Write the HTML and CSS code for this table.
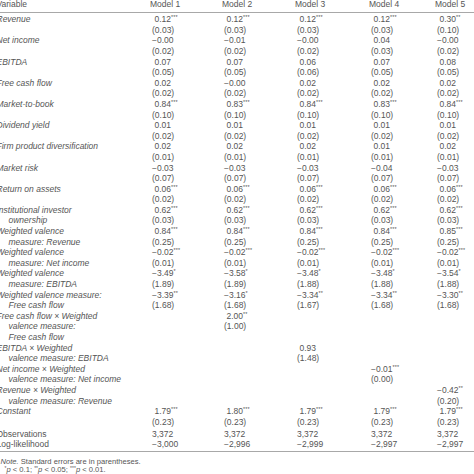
FILE: index.html
```html
<!DOCTYPE html>
<html>
<head>
<meta charset="utf-8">
<link rel="stylesheet" href="styles.css">
</head>
<body>
<div class="page">
  <div class="tbl">
    <div class="h lab up">Variable</div>
    <div class="h">Model 1</div>
    <div class="h">Model 2</div>
    <div class="h">Model 3</div>
    <div class="h">Model 4</div>
    <div class="h">Model 5</div>

    <div class="lab first"><div>Revenue</div></div>
    <div class="v first"><div class="p">0.12<sup>***</sup></div><div>(0.03)</div></div>
    <div class="v first"><div class="p">0.12<sup>***</sup></div><div>(0.03)</div></div>
    <div class="v first"><div class="p">0.12<sup>***</sup></div><div>(0.03)</div></div>
    <div class="v first"><div class="p">0.12<sup>***</sup></div><div>(0.03)</div></div>
    <div class="v first"><div class="p">0.30<sup>**</sup></div><div>(0.10)</div></div>

    <div class="lab"><div>Net income</div></div>
    <div class="v"><div>−0.00</div><div>(0.02)</div></div>
    <div class="v"><div>−0.01</div><div>(0.02)</div></div>
    <div class="v"><div>−0.00</div><div>(0.02)</div></div>
    <div class="v"><div class="p">0.04</div><div>(0.03)</div></div>
    <div class="v"><div>−0.00</div><div>(0.02)</div></div>

    <div class="lab"><div>EBITDA</div></div>
    <div class="v"><div class="p">0.07</div><div>(0.05)</div></div>
    <div class="v"><div class="p">0.07</div><div>(0.05)</div></div>
    <div class="v"><div class="p">0.06</div><div>(0.06)</div></div>
    <div class="v"><div class="p">0.07</div><div>(0.05)</div></div>
    <div class="v"><div class="p">0.08</div><div>(0.05)</div></div>

    <div class="lab"><div>Free cash flow</div></div>
    <div class="v"><div class="p">0.02</div><div>(0.02)</div></div>
    <div class="v"><div>−0.00</div><div>(0.02)</div></div>
    <div class="v"><div class="p">0.02</div><div>(0.02)</div></div>
    <div class="v"><div class="p">0.02</div><div>(0.02)</div></div>
    <div class="v"><div class="p">0.02</div><div>(0.02)</div></div>

    <div class="lab"><div>Market-to-book</div></div>
    <div class="v"><div class="p">0.84<sup>***</sup></div><div>(0.10)</div></div>
    <div class="v"><div class="p">0.83<sup>***</sup></div><div>(0.10)</div></div>
    <div class="v"><div class="p">0.84<sup>***</sup></div><div>(0.10)</div></div>
    <div class="v"><div class="p">0.83<sup>***</sup></div><div>(0.10)</div></div>
    <div class="v"><div class="p">0.84<sup>***</sup></div><div>(0.10)</div></div>

    <div class="lab"><div>Dividend yield</div></div>
    <div class="v"><div class="p">0.01</div><div>(0.02)</div></div>
    <div class="v"><div class="p">0.01</div><div>(0.02)</div></div>
    <div class="v"><div class="p">0.01</div><div>(0.02)</div></div>
    <div class="v"><div class="p">0.01</div><div>(0.02)</div></div>
    <div class="v"><div class="p">0.01</div><div>(0.02)</div></div>

    <div class="lab"><div>Firm product diversification</div></div>
    <div class="v"><div class="p">0.02</div><div>(0.01)</div></div>
    <div class="v"><div class="p">0.02</div><div>(0.01)</div></div>
    <div class="v"><div class="p">0.02</div><div>(0.01)</div></div>
    <div class="v"><div class="p">0.01</div><div>(0.01)</div></div>
    <div class="v"><div class="p">0.02</div><div>(0.01)</div></div>

    <div class="lab"><div>Market risk</div></div>
    <div class="v"><div>−0.03</div><div>(0.07)</div></div>
    <div class="v"><div>−0.03</div><div>(0.07)</div></div>
    <div class="v"><div>−0.03</div><div>(0.07)</div></div>
    <div class="v"><div>−0.04</div><div>(0.07)</div></div>
    <div class="v"><div>−0.03</div><div>(0.07)</div></div>

    <div class="lab"><div>Return on assets</div></div>
    <div class="v"><div class="p">0.06<sup>***</sup></div><div>(0.02)</div></div>
    <div class="v"><div class="p">0.06<sup>***</sup></div><div>(0.02)</div></div>
    <div class="v"><div class="p">0.06<sup>***</sup></div><div>(0.02)</div></div>
    <div class="v"><div class="p">0.06<sup>***</sup></div><div>(0.02)</div></div>
    <div class="v"><div class="p">0.06<sup>***</sup></div><div>(0.02)</div></div>

    <div class="lab"><div>Institutional investor</div><div class="c">ownership</div></div>
    <div class="v"><div class="p">0.62<sup>***</sup></div><div>(0.03)</div></div>
    <div class="v"><div class="p">0.62<sup>***</sup></div><div>(0.03)</div></div>
    <div class="v"><div class="p">0.62<sup>***</sup></div><div>(0.03)</div></div>
    <div class="v"><div class="p">0.62<sup>***</sup></div><div>(0.03)</div></div>
    <div class="v"><div class="p">0.62<sup>***</sup></div><div>(0.03)</div></div>

    <div class="lab"><div>Weighted valence</div><div class="c">measure: Revenue</div></div>
    <div class="v"><div class="p">0.84<sup>***</sup></div><div>(0.25)</div></div>
    <div class="v"><div class="p">0.84<sup>***</sup></div><div>(0.25)</div></div>
    <div class="v"><div class="p">0.84<sup>***</sup></div><div>(0.25)</div></div>
    <div class="v"><div class="p">0.84<sup>***</sup></div><div>(0.25)</div></div>
    <div class="v"><div class="p">0.85<sup>***</sup></div><div>(0.25)</div></div>

    <div class="lab"><div>Weighted valence</div><div class="c">measure: Net income</div></div>
    <div class="v"><div>−0.02<sup>***</sup></div><div>(0.01)</div></div>
    <div class="v"><div>−0.02<sup>***</sup></div><div>(0.01)</div></div>
    <div class="v"><div>−0.02<sup>***</sup></div><div>(0.01)</div></div>
    <div class="v"><div>−0.02<sup>***</sup></div><div>(0.01)</div></div>
    <div class="v"><div>−0.02<sup>***</sup></div><div>(0.01)</div></div>

    <div class="lab"><div>Weighted valence</div><div class="c">measure: EBITDA</div></div>
    <div class="v"><div>−3.49<sup>*</sup></div><div>(1.89)</div></div>
    <div class="v"><div>−3.58<sup>*</sup></div><div>(1.89)</div></div>
    <div class="v"><div>−3.48<sup>*</sup></div><div>(1.88)</div></div>
    <div class="v"><div>−3.48<sup>*</sup></div><div>(1.88)</div></div>
    <div class="v"><div>−3.54<sup>*</sup></div><div>(1.88)</div></div>

    <div class="lab"><div>Weighted valence measure:</div><div class="c">Free cash flow</div></div>
    <div class="v"><div>−3.39<sup>**</sup></div><div>(1.68)</div></div>
    <div class="v"><div>−3.16<sup>*</sup></div><div>(1.68)</div></div>
    <div class="v"><div>−3.34<sup>**</sup></div><div>(1.67)</div></div>
    <div class="v"><div>−3.34<sup>**</sup></div><div>(1.68)</div></div>
    <div class="v"><div>−3.30<sup>**</sup></div><div>(1.68)</div></div>

    <div class="lab"><div>Free cash flow × Weighted</div><div class="c">valence measure:</div><div class="c">Free cash flow</div></div>
    <div class="v"></div>
    <div class="v"><div class="p">2.00<sup>**</sup></div><div>(1.00)</div></div>
    <div class="v"></div>
    <div class="v"></div>
    <div class="v"></div>

    <div class="lab"><div>EBITDA × Weighted</div><div class="c">valence measure: EBITDA</div></div>
    <div class="v"></div>
    <div class="v"></div>
    <div class="v"><div class="p">0.93</div><div>(1.48)</div></div>
    <div class="v"></div>
    <div class="v"></div>

    <div class="lab"><div>Net income × Weighted</div><div class="c">valence measure: Net income</div></div>
    <div class="v"></div>
    <div class="v"></div>
    <div class="v"></div>
    <div class="v"><div>−0.01<sup>***</sup></div><div>(0.00)</div></div>
    <div class="v"></div>

    <div class="lab"><div>Revenue × Weighted</div><div class="c">valence measure: Revenue</div></div>
    <div class="v"></div>
    <div class="v"></div>
    <div class="v"></div>
    <div class="v"></div>
    <div class="v"><div>−0.42<sup>**</sup></div><div>(0.20)</div></div>

    <div class="lab"><div>Constant</div></div>
    <div class="v"><div class="p">1.79<sup>***</sup></div><div>(0.23)</div></div>
    <div class="v"><div class="p">1.80<sup>***</sup></div><div>(0.23)</div></div>
    <div class="v"><div class="p">1.79<sup>***</sup></div><div>(0.23)</div></div>
    <div class="v"><div class="p">1.79<sup>***</sup></div><div>(0.23)</div></div>
    <div class="v"><div class="p">1.79<sup>***</sup></div><div>(0.23)</div></div>

    <div class="lab up obs"><div>Observations</div></div>
    <div class="v obs"><div>3,372</div></div>
    <div class="v obs"><div>3,372</div></div>
    <div class="v obs"><div>3,372</div></div>
    <div class="v obs"><div>3,372</div></div>
    <div class="v obs"><div>3,372</div></div>

    <div class="lab up last"><div>Log-likelihood</div></div>
    <div class="v last"><div>−3,000</div></div>
    <div class="v last"><div>−2,996</div></div>
    <div class="v last"><div>−2,999</div></div>
    <div class="v last"><div>−2,997</div></div>
    <div class="v last"><div>−2,997</div></div>
  </div>
  <div class="note">
    <div><i>Note.</i> Standard errors are in parentheses.</div>
    <div class="stars"><sup>*</sup><i>p</i> &lt; 0.1; <sup>**</sup><i>p</i> &lt; 0.05; <sup>***</sup><i>p</i> &lt; 0.01.</div>
  </div>
</div>
</body>
</html>
```
FILE: styles.css
```css
html, body {
  margin: 0;
  padding: 0;
  background: #ffffff;
  overflow: hidden;
}
body {
  width: 474px;
  height: 474px;
  font-family: "Liberation Sans", Arial, sans-serif;
  color: #555555;
}
.page {
  width: 520px;
  margin-top: -1px;
}
.tbl {
  display: grid;
  grid-template-columns: 155.5px 72px 73px 74px 66px 80px;
  margin-left: -3.5px;
  font-size: 8.5px;
  line-height: 10.6px;
  border-bottom: 1.6px solid #a8a8a8;
  width: 520px;
}
.h {
  padding-bottom: 2px;
  border-bottom: 1.5px solid #a8a8a8;
  text-indent: -2px;
  white-space: nowrap;
}
.h.lab {
  text-indent: 0;
}
.lab {
  font-style: italic;
  white-space: nowrap;
}
.lab.up {
  font-style: normal;
}
.lab .c {
  padding-left: 12px;
}
.first {
  padding-top: 1.6px;
}
.obs {
  padding-top: 1.5px;
}
.last {
  padding-bottom: 1px;
}
.v {
  white-space: nowrap;
}
.v .p {
  padding-left: 2.5px;
}
sup {
  font-size: 5.4px;
  line-height: 0;
  vertical-align: 3px;
  letter-spacing: 0.1px;
}
.note {
  font-size: 7.6px;
  line-height: 8.6px;
  padding-top: 5.5px;
  padding-left: 0.5px;
  color: #555555;
}
.note .stars {
  padding-left: 4px;
}
.note sup {
  font-size: 4.8px;
  vertical-align: 2.5px;
}
```
